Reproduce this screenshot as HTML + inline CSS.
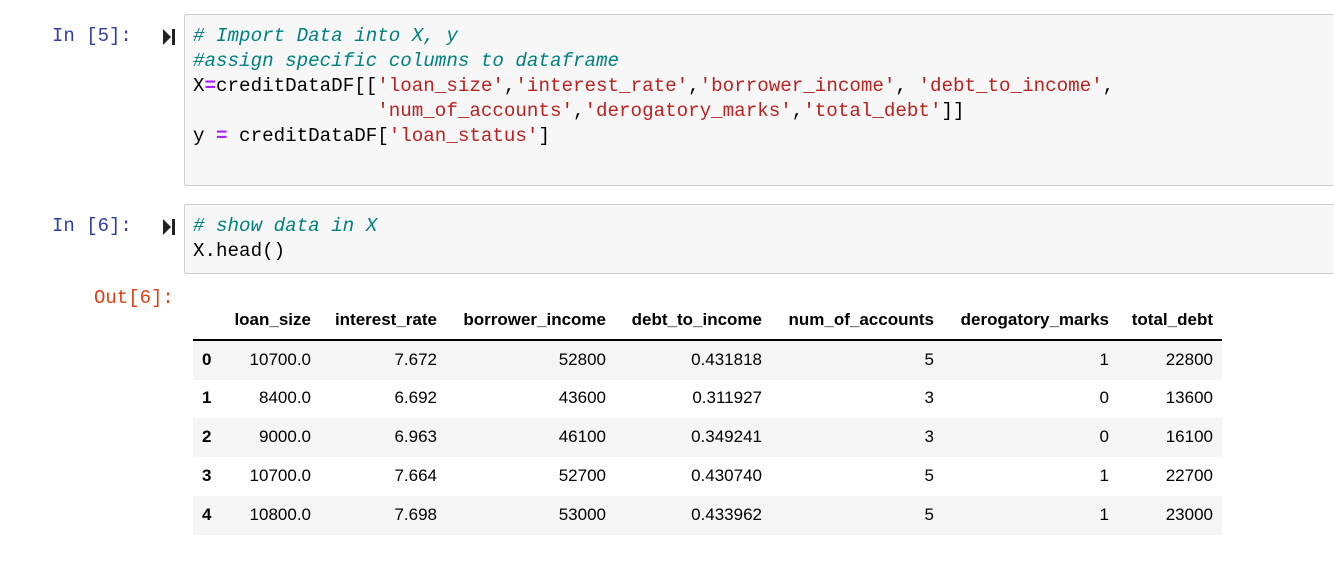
<!DOCTYPE html>
<html><head><meta charset="utf-8"><style>
body{margin:0;width:1334px;height:563px;background:#fff;position:relative;overflow:hidden;font-family:"Liberation Sans",Arial,sans-serif}
.p{position:absolute;font-family:"Liberation Mono",monospace;font-size:19px;color:#303f9f;line-height:25px}
.o{color:#d84315}
.box{position:absolute;left:184px;width:1160px;background:#f7f7f7;border:1px solid #cfcfcf;border-radius:2px;box-sizing:border-box}
.code{position:absolute;left:193px;font-family:"Liberation Mono",monospace;font-size:19.2px;line-height:25px;white-space:pre;color:#000}
.c{color:#008080;font-style:italic}.s{color:#ba2121}.e{color:#aa22ff;font-weight:bold}
.run{position:absolute;left:162px;width:14px;height:18px}
.row{position:absolute;left:193px;width:1029px;height:39px}
.t{position:absolute;font-size:17px;color:#000;line-height:20px}
.h{font-weight:bold}
</style></head><body>
<div class="p" style="left:52px;top:24px">In [5]:</div>
<svg class="run" style="top:28px" viewBox="0 0 14 18"><path d="M1 1 L9 9 L1 17 Z" fill="#222"/><rect x="10" y="1" width="3" height="16" fill="#222"/></svg>
<div class="box" style="top:14px;height:172px"></div>
<div class="code" style="top:24px"><span class="c"># Import Data into X, y</span>
<span class="c">#assign specific columns to dataframe</span>
X<span class="e">=</span>creditDataDF[[<span class="s">'loan_size'</span>,<span class="s">'interest_rate'</span>,<span class="s">'borrower_income'</span>, <span class="s">'debt_to_income'</span>,
                <span class="s">'num_of_accounts'</span>,<span class="s">'derogatory_marks'</span>,<span class="s">'total_debt'</span>]]
y <span class="e">=</span> creditDataDF[<span class="s">'loan_status'</span>]</div>

<div class="p" style="left:52px;top:214px">In [6]:</div>
<svg class="run" style="top:218px" viewBox="0 0 14 18"><path d="M1 1 L9 9 L1 17 Z" fill="#222"/><rect x="10" y="1" width="3" height="16" fill="#222"/></svg>
<div class="box" style="top:204px;height:70px"></div>
<div class="code" style="top:214px"><span class="c"># show data in X</span>
X.head()</div>

<div class="p o" style="left:94px;top:286px">Out[6]:</div>

<div style="position:absolute;left:193px;top:339px;width:1029px;height:2px;background:#000"></div>
<div class="row" style="top:341px;background:#f5f5f5"></div>
<div class="row" style="top:418px;background:#f5f5f5"></div>
<div class="row" style="top:496px;background:#f5f5f5"></div>

<div id="tbl"></div>
<script>
var rights=[311,437,606,762,934,1109,1213];
var hdr=["loan_size","interest_rate","borrower_income","debt_to_income","num_of_accounts","derogatory_marks","total_debt"];
var data=[["10700.0","7.672","52800","0.431818","5","1","22800"],["8400.0","6.692","43600","0.311927","3","0","13600"],["9000.0","6.963","46100","0.349241","3","0","16100"],["10700.0","7.664","52700","0.430740","5","1","22700"],["10800.0","7.698","53000","0.433962","5","1","23000"]];
var h="";
function cell(txt,r,y,b){return '<div class="t'+(b?' h':'')+'" style="right:'+(1334-r)+'px;top:'+y+'px">'+txt+'</div>';}
hdr.forEach(function(t,i){h+=cell(t,rights[i],310,1);});
var ys=[350,388,427,466,505];
data.forEach(function(r,j){h+='<div class="t h" style="left:202px;top:'+ys[j]+'px">'+j+'</div>';r.forEach(function(t,i){h+=cell(t,rights[i],ys[j],0);});});
document.getElementById("tbl").innerHTML=h;
</script>
</body></html>
